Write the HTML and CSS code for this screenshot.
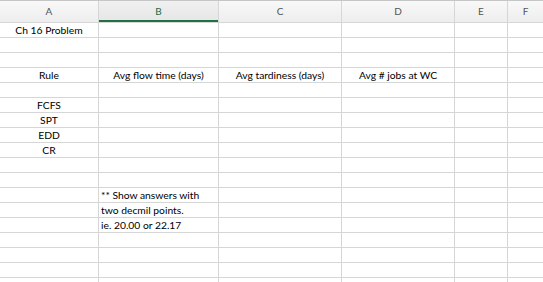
FILE: index.html
```html
<!DOCTYPE html>
<html lang="en">
<head>
  <meta charset="UTF-8" />
  <title>Ch 16 Problem</title>
  <link rel="stylesheet" href="styles.css">
</head>
<body>
  <div id="sheet">
    <div class="hd">A</div>
    <div class="hd selected">B</div>
    <div class="hd">C</div>
    <div class="hd">D</div>
    <div class="hd">E</div>
    <div class="hd">F</div>

    <div class="c center">Ch 16 Problem</div><div class="c"></div><div class="c"></div><div class="c"></div><div class="c"></div><div class="c"></div>
    <div class="c"></div><div class="c"></div><div class="c"></div><div class="c"></div><div class="c"></div><div class="c"></div>
    <div class="c"></div><div class="c"></div><div class="c"></div><div class="c"></div><div class="c"></div><div class="c"></div>
    <div class="c center">Rule</div><div class="c center">Avg flow time (days)</div><div class="c center">Avg tardiness (days)</div><div class="c center">Avg # jobs at WC</div><div class="c"></div><div class="c"></div>
    <div class="c"></div><div class="c"></div><div class="c"></div><div class="c"></div><div class="c"></div><div class="c"></div>
    <div class="c center">FCFS</div><div class="c"></div><div class="c"></div><div class="c"></div><div class="c"></div><div class="c"></div>
    <div class="c center">SPT</div><div class="c"></div><div class="c"></div><div class="c"></div><div class="c"></div><div class="c"></div>
    <div class="c center">EDD</div><div class="c"></div><div class="c"></div><div class="c"></div><div class="c"></div><div class="c"></div>
    <div class="c center">CR</div><div class="c"></div><div class="c"></div><div class="c"></div><div class="c"></div><div class="c"></div>
    <div class="c"></div><div class="c"></div><div class="c"></div><div class="c"></div><div class="c"></div><div class="c"></div>
    <div class="c"></div><div class="c"></div><div class="c"></div><div class="c"></div><div class="c"></div><div class="c"></div>
    <div class="c"></div><div class="c">** Show answers with</div><div class="c"></div><div class="c"></div><div class="c"></div><div class="c"></div>
    <div class="c"></div><div class="c">two decmil points.</div><div class="c"></div><div class="c"></div><div class="c"></div><div class="c"></div>
    <div class="c"></div><div class="c">ie. 20.00 or 22.17</div><div class="c"></div><div class="c"></div><div class="c"></div><div class="c"></div>
    <div class="c"></div><div class="c"></div><div class="c"></div><div class="c"></div><div class="c"></div><div class="c"></div>
    <div class="c"></div><div class="c"></div><div class="c"></div><div class="c"></div><div class="c"></div><div class="c"></div>
    <div class="c"></div><div class="c"></div><div class="c"></div><div class="c"></div><div class="c"></div><div class="c"></div>
    <div class="c"></div><div class="c"></div><div class="c"></div><div class="c"></div><div class="c"></div><div class="c"></div>
  </div>
</body>
</html>
```

FILE: styles.css
```css
body {
  margin: 0;
  background: #fff;
  font-family: Lato, "Liberation Sans", sans-serif;
  height: 282px;
  overflow: hidden;
}

#sheet {
  display: grid;
  grid-template-columns: 98px 119px 122px 112px 52px 1fr;
  grid-template-rows: 21px;
  grid-auto-rows: 14px;
  gap: 1px;
  background: #d6d6d6;
  border-top: 1px solid #c6c6c6;
}

.hd {
  background: linear-gradient(#f8f8f8, #eeeeee);
  color: #555;
  font-size: 10px;
  text-align: center;
  line-height: 20px;
}

.hd.selected {
  background: linear-gradient(#f0f0f0, #e6e6e6);
  color: #1e6b40;
  box-shadow: inset 0 -2px 0 #1e7145;
}

.c {
  background: #fff;
  font-size: 10.3px;
  line-height: 14px;
  color: #000;
  white-space: nowrap;
  padding-left: 2px;
}

.center {
  text-align: center;
  padding-left: 0;
}
```
